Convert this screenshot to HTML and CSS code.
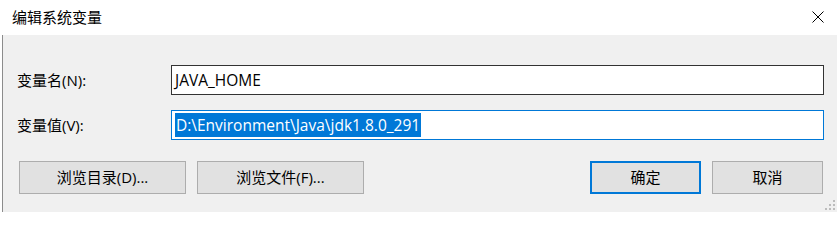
FILE: index.html
```html
<!DOCTYPE html>
<html lang="zh-CN">
<head>
<meta charset="utf-8">
<title>编辑系统变量</title>
<link rel="stylesheet" href="styles.css">
</head>
<body>
<div class="window">
  <div class="titlebar">
    <span class="title">编辑系统变量</span>
    <span class="close">
      <svg width="12" height="12" viewBox="0 0 12 12"><path d="M0.5 0.5 L11.5 11.5 M11.5 0.5 L0.5 11.5" stroke="#000" stroke-width="1" fill="none"/></svg>
    </span>
  </div>
  <div class="content">
    <div class="row">
      <label class="label">变量名(N):</label>
      <div class="field"><span class="value">JAVA_HOME</span></div>
    </div>
    <div class="row">
      <label class="label">变量值(V):</label>
      <div class="field focused"><span class="value sel">D:\Environment\Java\jdk1.8.0_291</span></div>
    </div>
    <div class="buttons">
      <button class="btn wide">浏览目录(D)...</button>
      <button class="btn wide">浏览文件(F)...</button>
      <span class="spacer"></span>
      <button class="btn small default">确定</button>
      <button class="btn small">取消</button>
    </div>
    <div class="grip">
      <i class="d d1"></i><i class="d d2"></i><i class="d d3"></i>
      <i class="d d4"></i><i class="d d5"></i><i class="d d6"></i>
    </div>
  </div>
</div>
</body>
</html>
```
FILE: styles.css
```css
html, body {
  margin: 0;
  padding: 0;
  background: #ffffff;
}
body {
  width: 837px;
  height: 212px;
  overflow: hidden;
  font-family: "Open Sans", "Noto Sans CJK SC", sans-serif;
  font-size: 15px;
  color: #000;
}
.window {
  display: flex;
  flex-direction: column;
  height: 212px;
}
.titlebar {
  height: 35px;
  flex: none;
  background: #ffffff;
  display: flex;
  align-items: center;
  justify-content: space-between;
  padding: 0 13px 2px 12px;
  box-sizing: border-box;
}
.title {
  font-size: 15px;
  line-height: 20px;
}
.close {
  display: flex;
  width: 12px;
  height: 12px;
}
.content {
  flex: 1;
  position: relative;
  margin-left: 2px;
  border-left: 1px solid #8c8c8c;
  background: #f0f0f0;
  padding: 30px 13px 0 14px;
  display: flex;
  flex-direction: column;
}
.row {
  display: flex;
  align-items: center;
  height: 30px;
  margin-bottom: 15px;
}
.label {
  width: 154px;
  flex: none;
  line-height: 20px;
  padding-bottom: 1px;
}
.field {
  width: 653px;
  height: 30px;
  box-sizing: border-box;
  border: 1px solid #333333;
  background: #ffffff;
  display: flex;
  align-items: center;
  padding-left: 3px;
}
.field.focused {
  border-color: #0078d7;
}
.value {
  font-size: 15.5px;
  line-height: 24px;
  white-space: nowrap;
}
.sel {
  background: #0078d7;
  color: #ffffff;
  padding: 0 1px;
}
.buttons {
  display: flex;
  gap: 11px;
  margin-top: 6px;
  margin-left: 2px;
  margin-right: 1px;
}
.spacer {
  flex: 1;
}
.btn {
  height: 33px;
  box-sizing: border-box;
  border: 1px solid #adadad;
  background: #e1e1e1;
  font-family: inherit;
  font-size: 15px;
  color: #000;
  padding: 0 0 2px;
  margin: 0;
}
.btn.wide {
  width: 167px;
}
.btn.small {
  width: 111px;
}
.btn.default {
  border: 2px solid #0078d7;
}
.grip {
  position: absolute;
  right: 0;
  bottom: 0;
  width: 12px;
  height: 12px;
}
.d {
  position: absolute;
  width: 2px;
  height: 2px;
  background: #bcbcbc;
}
.d1 { left: 8px; top: 0; }
.d2 { left: 4px; top: 4px; }
.d3 { left: 8px; top: 4px; }
.d4 { left: 0; top: 8px; }
.d5 { left: 4px; top: 8px; }
.d6 { left: 8px; top: 8px; }
```
